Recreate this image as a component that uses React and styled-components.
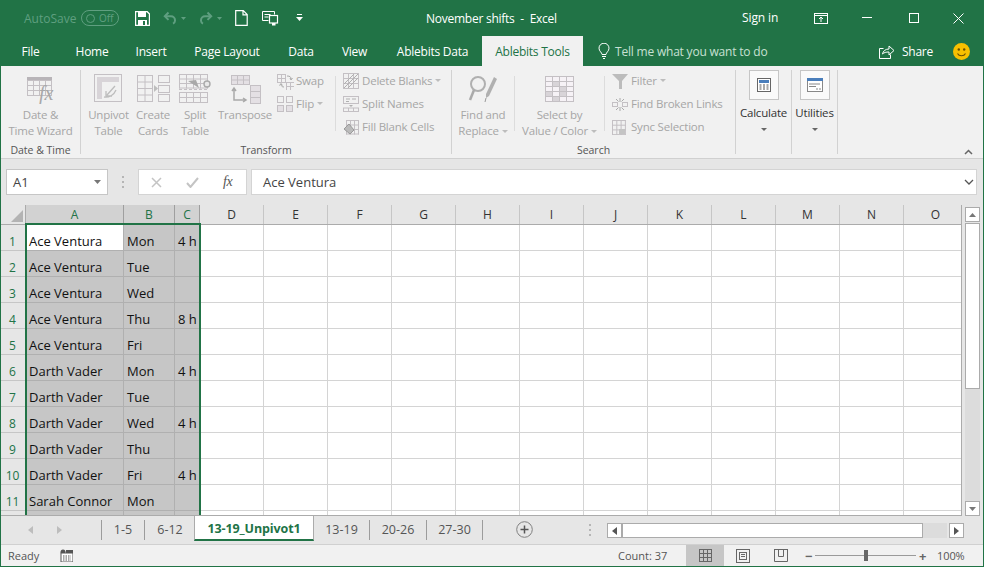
import React from "react";
import styled, { createGlobalStyle } from "styled-components";

const Global = createGlobalStyle`
  html, body { margin: 0; padding: 0; background: #fff; overflow: hidden; }
  * { box-sizing: border-box; }
`;
const UI = `"Open Sans", "Noto Sans", "Liberation Sans", sans-serif`;
const GREEN = "#217346";
const DIM = "#c4c0c4";
const DIM2 = "#e4e0e4";

const Window = styled.div`
  width: 984px; height: 567px; display: flex; flex-direction: column;
  border: 1px solid ${GREEN}; border-top: 0; font-family: ${UI}; overflow: hidden; background: #e6e6e6;
`;
const TitleBar = styled.div`
  height: 36px; flex: none; background: ${GREEN}; color: #fff; display: flex; align-items: center; font-size: 12px;
`;
const QuickAccess = styled.div`
  flex: none; width: 425px; height: 100%; display: flex; align-items: center; padding-left: 23px; position: relative;
`;
const AutoSave = styled.span`
  color: #5f9f80; font-size: 12px; width: 57px;
`;
const Toggle = styled.span`
  width: 38px; height: 16px; border: 1px solid #5f9f80; border-radius: 8px; color: #5f9f80; font-size: 10px;
  display: flex; align-items: center; padding-left: 4px; gap: 4px; margin-right: 16px;
  &::before { content: ""; width: 7px; height: 7px; border-radius: 50%; border: 1px solid #5f9f80; }
`;
const QuickIcon = styled.span`
  display: flex; width: ${p => p.$w}px; justify-content: flex-start; flex: none;
`;
const DocTitle = styled.div`
  flex: 1; font-size: 12px; white-space: pre; letter-spacing: -0.25px;
`;
const TitleRight = styled.div`
  flex: none; width: 241px; height: 100%; display: flex; align-items: center; position: relative;
`;
const SignIn = styled.span`
  font-size: 12px; width: 72px; letter-spacing: -0.1px; margin-top: -2px;
`;
const WinBtn = styled.span`
  display: flex; width: ${p => p.$w}px; flex: none; align-items: center;
`;

const TabBar = styled.div`
  height: 30px; flex: none; background: ${GREEN}; display: flex; align-items: stretch; font-size: 12px; color: #fff;
`;
const Tab = styled.div`
  width: ${p => p.$w}px; flex: none; display: flex; align-items: center; justify-content: center; white-space: nowrap;
  letter-spacing: -0.25px;
  ${p => p.$active && `background: #f1f1f1; color: ${GREEN};`}
`;
const TellMe = styled.div`
  display: flex; align-items: center; gap: 5px; color: #c8e0d3; width: 281px; margin-left: 15px; flex: none; letter-spacing: -0.2px;
`;
const ShareBox = styled.div`
  display: flex; align-items: center; gap: 7px; width: 74px; flex: none; letter-spacing: -0.25px;
`;

const Ribbon = styled.div`
  height: 93px; flex: none; background: #f1f1f1; border-bottom: 1px solid #d0d0d0; display: flex; align-items: flex-start; position: relative;
`;
const Group = styled.div`
  width: ${p => p.$w}px; flex: none; height: 84px; margin-top: 4px; border-right: 1px solid #d2d2d2;
  display: flex; flex-direction: column;
`;
const GroupBody = styled.div`
  height: 74px; flex: none; display: flex; align-items: flex-start; padding-left: ${p => p.$pad || 0}px;
`;
const GroupLabel = styled.div`
  height: 12px; line-height: 12px; text-align: center; font-size: 10.5px; color: #555; letter-spacing: 0;
`;
const BigButton = styled.div`
  width: ${p => p.$w}px; flex: none; display: flex; flex-direction: column; align-items: center;
`;
const BigIcon = styled.div`
  height: 37px; width: 100%; flex: none; display: flex; justify-content: center; align-items: center;
`;
const BigLabel = styled.div`
  font-size: 11.5px; line-height: 16px; color: #a6a6a6; text-align: center; white-space: nowrap; letter-spacing: -0.2px;
`;
const Caret = styled.span`
  display: inline-block; width: 0; height: 0; border: 3px solid transparent; border-top: 3px solid ${p => p.$c || "#bdbdbd"};
  border-bottom: 0; margin-left: 3px; vertical-align: middle;
`;
const SmallColumn = styled.div`
  width: ${p => p.$w}px; flex: none; margin-left: ${p => p.$ml || 0}px; margin-top: -1px; display: flex; flex-direction: column;
`;
const SmallRow = styled.div`
  height: 23px; display: flex; align-items: center; font-size: 11.5px; color: #a6a6a6; white-space: nowrap; letter-spacing: -0.2px;
`;
const SmallIcon = styled.span`
  width: 16px; margin-right: 3px; flex: none; display: flex; align-items: center; margin-top: 1px;
`;
const RibbonDivider = styled.div`
  width: 1px; height: 55px; margin-top: 6px; background: #dcdcdc; flex: none;
`;
const ToolBox = styled.div`
  width: 30px; height: 30px; border: 1px solid #c6c6c6; background: #fafafa; display: flex; align-items: center; justify-content: center;
`;
const ToolColumn = styled.div`
  width: 100%; display: flex; flex-direction: column; align-items: center;
`;
const ToolLabel = styled.div`
  font-size: 11.5px; color: #333; line-height: 16px; margin-top: 5px; letter-spacing: -0.2px; white-space: nowrap;
`;
const ToolCaret = styled.span`
  margin-top: 7px; width: 0; height: 0; border: 3px solid transparent; border-top: 3px solid #666; border-bottom: 0;
`;
const Collapse = styled.span`
  position: absolute; right: 10px; bottom: 3px; display: flex;
`;

const FormulaBar = styled.div`
  height: 46px; flex: none; display: flex; align-items: flex-start; padding: 10px 6px 0 5px; background: #e6e6e6;
`;
const NameBox = styled.div`
  width: 102px; height: 26px; background: #fff; border: 1px solid #c6c6c6; display: flex; align-items: center; justify-content: space-between;
  padding: 0 6px 0 6px; font-size: 13px; color: #444; flex: none;
`;
const Dots = styled.div`
  width: ${p => p.$w}px; flex: none; display: flex; flex-direction: column; align-items: center; gap: 3px;
  padding-top: ${p => p.$top}px; padding-left: ${p => p.$left || 0}px;
  & > i { width: 2px; height: 2px; background: #b5b5b5; display: block; }
`;
const FormulaTools = styled.div`
  width: 109px; height: 26px; background: #fff; border: 1px solid #d4d4d4; flex: none; display: flex; align-items: center; padding-left: 12px; gap: 24px;
`;
const FxMark = styled.span`
  font-family: "Liberation Serif", serif; font-style: italic; font-size: 14px; color: #555; letter-spacing: -0.5px;
`;
const FormulaInput = styled.div`
  flex: 1; margin-left: 4px; height: 26px; background: #fff; border: 1px solid #d4d4d4; display: flex; align-items: center; justify-content: space-between;
  padding: 0 2px 0 11px; font-size: 13px; color: #444;
`;

const SheetArea = styled.div`
  height: 311px; flex: none; display: flex;
`;
const SheetPane = styled.div`
  width: 961px; flex: none; height: 100%; background: #fff; position: relative; overflow: hidden; border-right: 1px solid #ababab; border-bottom: 1px solid #ababab;
`;
const HeaderRow = styled.div`
  height: 20px; display: flex; background: #e6e6e6; border-bottom: 1px solid #ababab;
`;
const Corner = styled.div`
  width: 25px; flex: none; display: flex; align-items: flex-end; justify-content: flex-end; padding: 0 2px 2px 0; border-right: 1px solid #ababab;
  &::after { content: ""; width: 0; height: 0; border-left: 12px solid transparent; border-bottom: 12px solid #b3b3b3; }
`;
const ColHead = styled.div`
  width: ${p => p.$w}px; flex: none; display: flex; align-items: center; justify-content: center; font-size: 12px;
  border-right: 1px solid ${p => (p.$sel ? "#9f9f9f" : "#c6c6c6")};
  background: ${p => (p.$sel ? "#d2d2d2" : "#e6e6e6")}; color: ${p => (p.$sel ? GREEN : "#333")};
`;
const Row = styled.div`
  display: flex; height: 26px;
`;
const RowHead = styled.div`
  width: 25px; flex: none; background: #e6e6e6; border-right: 1px solid #ababab; border-bottom: 1px solid #c6c6c6;
  font-size: 12px; color: ${GREEN}; display: flex; align-items: flex-end; justify-content: center; padding-bottom: 0; padding-right: 1px;
`;
const Cell = styled.div`
  width: ${p => p.$w}px; flex: none; padding: 0 0 0 3px; font-size: 13px; color: #111; white-space: nowrap; overflow: hidden;
  display: flex; align-items: flex-end;
  background: ${p => (p.$sel ? (p.$active ? "#fff" : "#c6c6c6") : "#fff")};
  border-right: 1px solid ${p => (p.$sel ? "#b0b0b0" : "#d4d4d4")};
  border-bottom: 1px solid ${p => (p.$sel ? "#b0b0b0" : "#d4d4d4")};
`;
const Selection = styled.div`
  position: absolute; left: 24px; top: 18px; width: 176px; height: 320px; border: 2px solid ${GREEN}; pointer-events: none;
`;
const VScroll = styled.div`
  width: 21px; flex: none; display: flex; flex-direction: column; padding: 2px 3px 0 3px; background: #e6e6e6;
`;
const ScrollBtn = styled.div`
  width: 15px; height: 15px; background: #fff; border: 1px solid #ababab; flex: none; display: flex; align-items: center; justify-content: center;
`;
const VThumb = styled.div`
  width: 15px; height: 166px; margin-top: 1px; background: #fff; border: 1px solid #ababab; flex: none;
`;
const VTrack = styled.div`
  flex: 1; background: #dcdcdc;
`;

const SheetBar = styled.div`
  height: 28px; flex: none; display: flex; align-items: flex-start; background: #e6e6e6;
`;
const SheetNav = styled.div`
  width: 101px; height: 20px; margin-top: 4px; flex: none; display: flex; align-items: center; padding-left: 27px; gap: 24px; border-right: 1px solid #9c9c9c;
`;
const SheetTab = styled.div`
  width: ${p => p.$w}px; flex: none; text-align: center; white-space: nowrap; font-size: 12.5px;
  ${p => p.$active ? `
    height: 25px; background: #fff; color: ${GREEN}; font-weight: 700; border-bottom: 2px solid ${GREEN}; border-left: 1px solid #ababab; border-right: 1px solid #ababab; line-height: 26px; letter-spacing: -0.1px;
    margin-left: -1px;
  ` : `
    height: 20px; margin-top: 4px; line-height: 20px; color: #555; border-right: ${p.$plain ? 0 : "1px solid #9c9c9c"};
  `}
`;
const AddSheet = styled.span`
  display: flex; flex: none; margin: 5px 0 0 33px;
`;
const HScroll = styled.div`
  width: 357px; height: 15px; margin-top: 7px; flex: none; display: flex;
`;
const HBtn = styled.div`
  width: 15px; height: 15px; background: #fff; border: 1px solid #ababab; display: flex; align-items: center; justify-content: center; flex: none;
  margin-left: ${p => p.$ml || 0}px;
`;
const HThumb = styled.div`
  width: 301px; height: 15px; background: #fff; border: 1px solid #ababab; flex: none;
`;

const StatusBar = styled.div`
  height: 22px; flex: none; background: #f1f1f1; display: flex; align-items: center; font-size: 11px; color: #555; border-top: 1px solid #d0d0d0;
`;
const Ready = styled.span`
  width: 59px; padding-left: 7px; flex: none;
`;
const Count = styled.span`
  margin-left: 545px; width: 68px; flex: none; letter-spacing: 0;
`;
const ViewBtn = styled.span`
  width: 38px; height: 22px; flex: none; display: flex; align-items: center; justify-content: center; background: ${p => (p.$on ? "#c6c6c6" : "transparent")};
`;
const ZoomBar = styled.div`
  display: flex; align-items: center; margin-left: 5px; flex: none; width: 124px; gap: 2px;
`;
const ZoomTrack = styled.div`
  width: 101px; height: 1px; background: #9a9a9a; position: relative; margin: 0 1px;
  &::after { content: ""; position: absolute; left: 49px; top: -5px; width: 4px; height: 11px; background: #666; }
`;
const ZoomSign = styled.span`
  font-size: 13px; font-weight: 700; color: #666; width: 7px; line-height: 12px; text-align: center;
`;
const ZoomPct = styled.span`
  margin-left: 8px; flex: none; letter-spacing: -0.1px;
`;

/* ---------- icons ---------- */
const Svg = ({ w, h, children }) => <svg width={w} height={h} viewBox={`0 0 ${w} ${h}`} fill="none" style={{ display: "block", flex: "none" }}>{children}</svg>;

const GridLines = ({ x, y, cw, ch, nx, ny, c = DIM }) => {
  const d = [];
  for (let i = 0; i <= nx; i++) d.push(`M${x + i * cw + .5} ${y}v${ny * ch + 1}`);
  for (let j = 0; j <= ny; j++) d.push(`M${x} ${y + j * ch + .5}h${nx * cw + 1}`);
  return <path d={d.join("")} stroke={c} />;
};

const SaveIcon = () => <Svg w={15} h={15}><path d="M.5.5h11.5l2.5 2.5v11.5H.5z" fill={GREEN} stroke="#fff" strokeWidth="1.4"/><rect x="3" y="1" width="8" height="5" fill="#fff"/><rect x="3" y="9" width="9" height="5.5" fill="#fff"/><rect x="8" y="10" width="2" height="4" fill={GREEN}/></Svg>;
const UndoIcon = ({ flip }) => <Svg w={24} h={14}><g transform={flip ? "translate(14 0) scale(-1 1)" : undefined} stroke="#5f9f80" strokeWidth="2"><path d="M5.5 1.5 1.8 5.2l3.7 3.7"/><path d="M2 5.2h6a4 4 0 0 1 4 4v.5a3.5 3.5 0 0 1-2 3"/></g><path d="M18 6h5l-2.5 3z" fill="#5f9f80"/></Svg>;
const NewIcon = () => <Svg w={13} h={16}><path d="M.7.7h7.6l3.9 3.9v10.7H.7z M8 .7v4.2h4.2" stroke="#fff" strokeWidth="1.2"/></Svg>;
const TouchIcon = () => <Svg w={17} h={16}><path d="M.5 1.5h12v3M.5 1.5v9h6M2.5 4.5h6M2.5 7h4" stroke="#fff"/><rect x="7.5" y="5.5" width="8" height="7.5" stroke="#fff" strokeWidth="1.2" fill={GREEN}/><rect x="10" y="13" width="3.5" height="2.5" fill="#fff"/></Svg>;
const CustomizeIcon = () => <Svg w={7} h={8}><path d="M1 0h5v1H1z" fill="#fff"/><path d="M0 3h7L3.5 7z" fill="#fff"/></Svg>;
const RibbonOpts = () => <Svg w={14} h={11}><rect x=".5" y=".5" width="13" height="10" stroke="#fff"/><path d="M.5 2.5h13" stroke="#fff"/><path d="M7 4v5M5 6l2-2 2 2" stroke="#fff"/></Svg>;
const MinIcon = () => <Svg w={10} h={2}><path d="M0 .5h10" stroke="#fff"/></Svg>;
const MaxIcon = () => <Svg w={10} h={10}><rect x=".5" y=".5" width="9" height="9" stroke="#fff"/></Svg>;
const CloseIcon = () => <Svg w={11} h={11}><path d="M.5.5l10 10M10.5.5l-10 10" stroke="#fff"/></Svg>;
const BulbIcon = () => <Svg w={12} h={16}><path d="M4 11.5c0-2-3-3.2-3-6.3a5 5 0 0 1 10 0c0 3.1-3 4.3-3 6.3z" stroke="#fff" strokeWidth="1"/><path d="M4 13.5h4M5 15.5h2" stroke="#fff"/></Svg>;
const ShareIcon = () => <Svg w={16} h={15}><path d="M4.5 4.5H.5v10h11v-4" stroke="#fff"/><path d="M3.5 10c.5-3 3-5 6.5-5V2l5 4.5-5 4.5V8c-3 0-5 .5-6.5 2z" stroke="#fff" fill={GREEN}/></Svg>;
const Smiley = () => <Svg w={17} h={17}><circle cx="8.5" cy="8.5" r="8.5" fill="#f8c000"/><circle cx="5.8" cy="6.5" r="1.2" fill="#6b4e00"/><circle cx="11.2" cy="6.5" r="1.2" fill="#6b4e00"/><path d="M4.5 10.5c1.5 3 6.5 3 8 0" stroke="#6b4e00" strokeWidth="1.1"/></Svg>;

const DateIcon = () => <Svg w={30} h={30}><rect x="1" y="3" width="25" height="3" fill="#b8b4b8"/><GridLines x={1} y={6} cw={6} ch={5} nx={4} ny={3}/><text x="13" y="26" fontFamily="Liberation Serif, serif" fontStyle="italic" fontSize="20" fill="#a8a8a8">fx</text></Svg>;
const UnpivotIcon = () => <Svg w={29} h={29}><rect x=".5" y=".5" width="27" height="27" stroke={DIM} strokeWidth="1"/><rect x="3" y="3" width="22" height="5" fill="#d8d4d8"/><rect x="3" y="8" width="5" height="17" fill="#d8d4d8"/><path d="M21 12 L13 21 M12 17v5h6M10 23c5 1 10-2 12-7" stroke="#bdbdbd" strokeWidth="1.3"/></Svg>;
const CardsIcon = () => <Svg w={33} h={27}><GridLines x={0} y={0} cw={7.5} ch={6.5} nx={2} ny={4}/><path d="M17 10l4 3.5-4 3.5z" fill="#bdbdbd"/><rect x="21.5" y=".5" width="11" height="7" stroke={DIM}/><rect x="21.5" y="10.5" width="11" height="7" stroke={DIM}/><rect x="21.5" y="19.5" width="11" height="7" stroke={DIM}/></Svg>;
const SplitIcon = () => <Svg w={32} h={29}><GridLines x={0} y={0} cw={7} ch={4.5} nx={4} ny={3}/><GridLines x={0} y={18} cw={7} ch={5} nx={4} ny={2}/><path d="M0 15.5h29" stroke={DIM} strokeDasharray="3 2"/><path d="M9 7l11 7-3-8z" fill="#a9a9a9"/><circle cx="28" cy="10" r="3" fill="#e8e8e8" stroke="#a9a9a9" strokeWidth="1.4"/></Svg>;
const TransposeIcon = () => <Svg w={31} h={30}><rect x="1" y="1" width="18" height="9" fill={DIM2}/><GridLines x={1} y={1} cw={6} ch={4.5} nx={3} ny={2}/><rect x="20" y="11" width="10" height="18" fill={DIM2}/><GridLines x={20} y={11} cw={10} ch={6} nx={1} ny={3}/><path d="M4 15v11h11M2 17l2-3 2 3M13 24l3 2-3 2" stroke="#a9a9a9" strokeWidth="1.5"/></Svg>;
const SwapIcon = () => <Svg w={17} h={17}><GridLines x={0} y={1} cw={4} ch={4} nx={2} ny={2}/><GridLines x={9} y={9} cw={4} ch={4} nx={2} ny={2}/><path d="M10 3c3 0 4 1 4 3M13 5l1 2 1.5-2M7 14c-2 0-3-1-3-3M2.5 12.5L4 10.500l1.500 2" stroke="#a9a9a9"/></Svg>;
const FlipIcon = () => <Svg w={16} h={16}><rect x=".5" y=".5" width="6" height="6" stroke={DIM}/><rect x="9.5" y=".5" width="6" height="6" stroke={DIM}/><rect x=".5" y="9.500" width="6" height="6" stroke={DIM} fill={DIM2}/><rect x="9.500" y="9.500" width="6" height="6" stroke={DIM} fill={DIM2}/></Svg>;
const DeleteBlanksIcon = () => <Svg w={16} h={16}><GridLines x={0} y={0} cw={5} ch={5} nx={3} ny={3}/><path d="M1 15L15 1M5 15L15 5M1 11L11 1" stroke="#b0b0b0"/></Svg>;
const SplitNamesIcon = () => <Svg w={16} h={16}><rect x=".5" y=".5" width="15" height="7" stroke={DIM}/><path d="M3 3h4M9 3h4M3 5.500h3" stroke="#b0b0b0"/><path d="M6 9h4l-2 2z" fill="#b0b0b0"/><rect x=".5" y="12" width="15" height="3.500" stroke={DIM}/><path d="M5.500 12v3M10.500 12v3" stroke={DIM}/></Svg>;
const FillIcon = () => <Svg w={16} h={15}><GridLines x={3} y={0} cw={4} ch={4.500} nx={3} ny={3}/><path d="M1 9l5-5 5 6-4 4z" fill="#bbb" stroke="#999"/></Svg>;
const FindIcon = () => <Svg w={31} h={28}><circle cx="10" cy="9" r="7" stroke="#b0b0b0" strokeWidth="2"/><path d="M6 15L2 25" stroke="#aaa" strokeWidth="2.500"/><path d="M26 2l3 2-8 17-3 2v-4z" fill="#b0b0b0"/><path d="M18 23l-1 4" stroke="#999"/></Svg>;
const SelectIcon = () => <Svg w={29} h={26}><rect width="29" height="26" fill="#f6f2f6"/><rect x="8" y="5" width="7" height="5" fill="#d8d4d8"/><rect x="15" y="10" width="7" height="5" fill="#d8d4d8"/><rect x="1" y="15" width="7" height="5" fill="#d8d4d8"/><rect x="15" y="15" width="7" height="5" fill="#d8d4d8"/><rect x="8" y="20" width="7" height="5" fill="#d8d4d8"/><GridLines x={0} y={0} cw={7} ch={5} nx={4} ny={5}/></Svg>;
const FilterIcon = () => <Svg w={16} h={15}><path d="M0 0h16L10 7v8H7V7z" fill="#bcbcbc"/></Svg>;
const LinksIcon = () => <Svg w={16} h={15}><rect x=".5" y="5.500" width="5" height="4" stroke={DIM}/><rect x="10.500" y="5.500" width="5" height="4" stroke={DIM}/><path d="M8 1v4M8 10v4M4 2l2.500 2.500M12 2l-2.500 2.500M4 13l2.500-2.500M12 13l-2.500-2.500" stroke="#aaa"/></Svg>;
const SyncIcon = () => <Svg w={14} h={15}><GridLines x={0} y={0} cw={4.300} ch={4.700} nx={3} ny={3}/><rect x="7" y="9" width="6" height="5" fill="#c4c4c4"/></Svg>;
const CalcIcon = () => <Svg w={14} h={14}><rect x=".5" y=".5" width="13" height="13" stroke="#666" fill="#fff"/><rect x="2" y="2" width="10" height="3" fill="#4a7ebb"/><path d="M2.500 7h2M6 7h2M9.500 7h2M2.500 9h2M6 9h2M9.500 9h2M2.500 11h2M6 11h2M9.500 11h2" stroke="#555"/></Svg>;
const UtilIcon = () => <Svg w={16} h={14}><rect x=".5" y=".5" width="15" height="13" stroke="#888" fill="#fff"/><rect width="16" height="3" fill="#4a7ebb"/><path d="M2 6h11M2 8.500h7M9 11h2M12 11h2" stroke="#888"/></Svg>;
const Chevron = () => <Svg w={9} h={6}><path d="M1 5l3.500-3.500L8 5" stroke="#666" strokeWidth="1.500"/></Svg>;
const NameCaret = () => <Svg w={7} h={4}><path d="M0 0h7L3.500 4z" fill="#777"/></Svg>;
const XMark = () => <Svg w={11} h={11}><path d="M1 1l9 9M10 1l-9 9" stroke="#c4c4c4" strokeWidth="1.500"/></Svg>;
const CheckMark = () => <Svg w={13} h={11}><path d="M1 6l3.500 4L12 1" stroke="#c4c4c4" strokeWidth="2"/></Svg>;
const FormulaChevron = () => <Svg w={10} h={6}><path d="M1 1l4 4 4-4" stroke="#555" strokeWidth="1.300"/></Svg>;
const VArrow = ({ up }) => <Svg w={7} h={4}><path d={up ? "M0 4h7L3.500 0z" : "M0 0h7L3.500 4z"} fill="#777"/></Svg>;
const Tri = ({ dir, c = "#bdbdbd" }) => <Svg w={5} h={8}><path d={dir === "l" ? "M5 0v8L0 4z" : "M0 0v8l5-4z"} fill={c}/></Svg>;
const PlusCircle = () => <Svg w={17} h={17}><circle cx="8.500" cy="8.500" r="7.800" stroke="#808080" strokeWidth="1"/><path d="M8.500 4.500v8M4.500 8.500h8" stroke="#555" strokeWidth="1.500"/></Svg>;
const MacroIcon = () => <Svg w={13} h={13}><circle cx="3" cy="3" r="2.500" fill="#555"/><rect x="1" y="4" width="12" height="9" fill="#fff" stroke="#555"/><rect x="6" y="1" width="7" height="3" fill="#555"/><path d="M3 7h8M3 9h8M3 11h8" stroke="#555" strokeDasharray="1.500 1"/></Svg>;
const NormalView = () => <Svg w={13} h={13}><GridLines x={0} y={0} cw={4} ch={4} nx={3} ny={3} c="#666"/></Svg>;
const PageView = () => <Svg w={14} h={14}><rect x=".5" y=".5" width="13" height="13" stroke="#666"/><rect x="3.500" y="3.500" width="7" height="7" stroke="#666"/><path d="M5 5.500h4M5 7.500h4" stroke="#666"/></Svg>;
const BreakView = () => <Svg w={14} h={13}><path d="M.5 0v12.500h13V0z" stroke="#666"/><path d="M.5.500h13M4.500 0v7.500h5V0" stroke="#666"/></Svg>;

/* ---------- data ---------- */
const COLS = [["A", 98, 1], ["B", 51, 1], ["C", 25, 1], ..."DEFGHIJKLMNO"].map(c => (Array.isArray(c) ? c : [c, 64, 0]));
const DATA = [
  ["Ace Ventura", "Mon", "4 h"], ["Ace Ventura", "Tue", ""], ["Ace Ventura", "Wed", ""], ["Ace Ventura", "Thu", "8 h"],
  ["Ace Ventura", "Fri", ""], ["Darth Vader", "Mon", "4 h"], ["Darth Vader", "Tue", ""], ["Darth Vader", "Wed", "4 h"],
  ["Darth Vader", "Thu", ""], ["Darth Vader", "Fri", "4 h"], ["Sarah Connor", "Mon", ""], ["", "", ""],
];
const TABS = [["File", 59, 0], ["Home", 64], ["Insert", 54], ["Page Layout", 98], ["Data", 50], ["View", 57], ["Ablebits Data", 99], ["Ablebits Tools", 101, 1]];

const Big = ({ w, icon, lines }) => (
  <BigButton $w={w}>
    <BigIcon>{icon}</BigIcon>
    {lines.map((l, i) => <BigLabel key={i}>{l}</BigLabel>)}
  </BigButton>
);
const Small = ({ icon, label, caret }) => (
  <SmallRow><SmallIcon>{icon}</SmallIcon>{label}{caret && <Caret />}</SmallRow>
);

export default function App() {
  return (
    <>
      <Global />
      <Window>
        <TitleBar>
          <QuickAccess>
            <AutoSave>AutoSave</AutoSave>
            <Toggle>Off</Toggle>
            <QuickIcon $w={28}><SaveIcon /></QuickIcon>
            <QuickIcon $w={36}><UndoIcon /></QuickIcon>
            <QuickIcon $w={36}><UndoIcon flip /></QuickIcon>
            <QuickIcon $w={27}><NewIcon /></QuickIcon>
            <QuickIcon $w={34}><TouchIcon /></QuickIcon>
            <QuickIcon $w={7}><CustomizeIcon /></QuickIcon>
          </QuickAccess>
          <DocTitle>November shifts  -  Excel</DocTitle>
          <TitleRight>
            <SignIn>Sign in</SignIn>
            <WinBtn $w={48}><RibbonOpts /></WinBtn>
            <WinBtn $w={47}><MinIcon /></WinBtn>
            <WinBtn $w={44}><MaxIcon /></WinBtn>
            <WinBtn $w={11}><CloseIcon /></WinBtn>
          </TitleRight>
        </TitleBar>
        <TabBar>
          {TABS.map(([t, w, a]) => <Tab key={t} $w={w} $active={a}>{t}</Tab>)}
          <TellMe><BulbIcon />Tell me what you want to do</TellMe>
          <ShareBox><ShareIcon />Share</ShareBox>
          <Tab $w={17}><Smiley /></Tab>
        </TabBar>
        <Ribbon>
          <Group $w={80}>
            <GroupBody><Big w={79} icon={<DateIcon />} lines={["Date &", "Time Wizard"]} /></GroupBody>
            <GroupLabel>Date &amp; Time</GroupLabel>
          </Group>
          <Group $w={371}>
            <GroupBody $pad={5}>
              <Big w={45} icon={<UnpivotIcon />} lines={["Unpivot", "Table"]} />
              <Big w={44} icon={<CardsIcon />} lines={["Create", "Cards"]} />
              <Big w={40} icon={<SplitIcon />} lines={["Split", "Table"]} />
              <Big w={60} icon={<TransposeIcon />} lines={["Transpose"]} />
              <SmallColumn $w={58} $ml={2}>
                <Small icon={<SwapIcon />} label="Swap" />
                <Small icon={<FlipIcon />} label="Flip" caret />
              </SmallColumn>
              <RibbonDivider />
              <SmallColumn $w={100} $ml={7}>
                <Small icon={<DeleteBlanksIcon />} label="Delete Blanks" caret />
                <Small icon={<SplitNamesIcon />} label="Split Names" />
                <Small icon={<FillIcon />} label="Fill Blank Cells" />
              </SmallColumn>
            </GroupBody>
            <GroupLabel>Transform</GroupLabel>
          </Group>
          <Group $w={284}>
            <GroupBody>
              <Big w={62} icon={<FindIcon />} lines={["Find and", <React.Fragment key="r">Replace<Caret /></React.Fragment>]} />
              <RibbonDivider />
              <Big w={89} icon={<SelectIcon />} lines={["Select by", <React.Fragment key="v">Value / Color<Caret /></React.Fragment>]} />
              <RibbonDivider />
              <SmallColumn $w={120} $ml={7}>
                <Small icon={<FilterIcon />} label="Filter" caret />
                <Small icon={<LinksIcon />} label="Find Broken Links" />
                <Small icon={<SyncIcon />} label="Sync Selection" />
              </SmallColumn>
            </GroupBody>
            <GroupLabel>Search</GroupLabel>
          </Group>
          <Group $w={56}>
            <GroupBody>
              <ToolColumn><ToolBox><CalcIcon /></ToolBox><ToolLabel>Calculate</ToolLabel><ToolCaret /></ToolColumn>
            </GroupBody>
          </Group>
          <Group $w={46}>
            <GroupBody>
              <ToolColumn><ToolBox><UtilIcon /></ToolBox><ToolLabel>Utilities</ToolLabel><ToolCaret /></ToolColumn>
            </GroupBody>
          </Group>
          <Collapse><Chevron /></Collapse>
        </Ribbon>
        <FormulaBar>
          <NameBox>A1<NameCaret /></NameBox>
          <Dots $w={30} $top={7}><i /><i /><i /></Dots>
          <FormulaTools><XMark /><CheckMark /><FxMark>fx</FxMark></FormulaTools>
          <FormulaInput>Ace Ventura<FormulaChevron /></FormulaInput>
        </FormulaBar>
        <SheetArea>
          <SheetPane>
            <HeaderRow>
              <Corner />
              {COLS.map(([c, w, s]) => <ColHead key={c} $w={w} $sel={s}>{c}</ColHead>)}
            </HeaderRow>
            {DATA.map((r, i) => (
              <Row key={i}>
                <RowHead>{i < 11 ? i + 1 : ""}</RowHead>
                {COLS.map(([c, w, s], j) => (
                  <Cell key={c} $w={w} $sel={s} $active={i === 0 && j === 0}>{r[j] || ""}</Cell>
                ))}
              </Row>
            ))}
            <Selection />
          </SheetPane>
          <VScroll>
            <ScrollBtn><VArrow up /></ScrollBtn>
            <VThumb />
            <VTrack />
            <ScrollBtn><VArrow /></ScrollBtn>
          </VScroll>
        </SheetArea>
        <SheetBar>
          <SheetNav><Tri dir="l" /><Tri dir="r" /></SheetNav>
          <SheetTab $w={43}>1-5</SheetTab>
          <SheetTab $w={50} $plain>6-12</SheetTab>
          <SheetTab $w={120} $active>13-19_Unpivot1</SheetTab>
          <SheetTab $w={56}>13-19</SheetTab>
          <SheetTab $w={57}>20-26</SheetTab>
          <SheetTab $w={56}>27-30</SheetTab>
          <AddSheet><PlusCircle /></AddSheet>
          <Dots $w={74} $top={8} $left={40}><i /><i /><i /></Dots>
          <HScroll>
            <HBtn><Tri dir="l" c="#555" /></HBtn>
            <HThumb />
            <VTrack />
            <HBtn $ml={2}><Tri dir="r" c="#555" /></HBtn>
          </HScroll>
        </SheetBar>
        <StatusBar>
          <Ready>Ready</Ready>
          <MacroIcon />
          <Count>Count: 37</Count>
          <ViewBtn $on><NormalView /></ViewBtn>
          <ViewBtn><PageView /></ViewBtn>
          <ViewBtn><BreakView /></ViewBtn>
          <ZoomBar>
            <ZoomSign>−</ZoomSign>
            <ZoomTrack />
            <ZoomSign>+</ZoomSign>
          </ZoomBar>
          <ZoomPct>100%</ZoomPct>
        </StatusBar>
      </Window>
    </>
  );
}
